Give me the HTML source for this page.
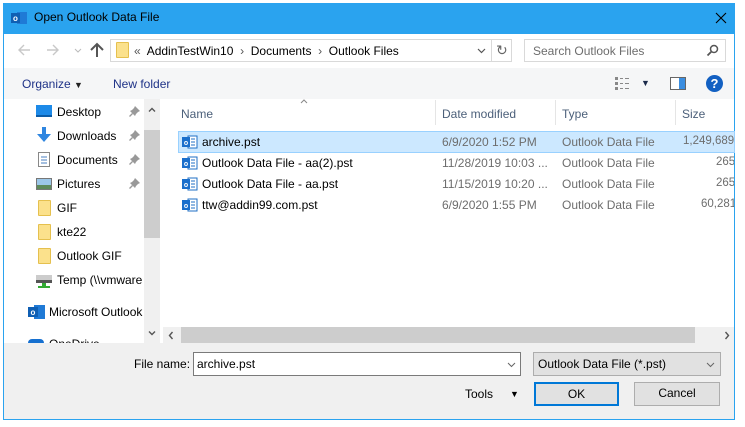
<!DOCTYPE html>
<html><head><meta charset="utf-8"><style>
*{box-sizing:border-box;margin:0;padding:0}
body{width:745px;height:427px;background:#fff;font-family:"Liberation Sans",sans-serif;font-size:12px;color:#000;position:relative;overflow:hidden}
.a{position:absolute}
.win{left:3px;top:3px;width:732px;height:417px;border:1px solid #2aa3ef;background:#fff}
.title{left:3px;top:3px;width:732px;height:31px;background:#2aa3ef}
.t{white-space:nowrap}
.fold{width:13px;height:16px;background:#fbe18c;border:1px solid #e5c04e;border-radius:1px}
.side{font-size:12px}
.hdr{color:#4c607a}
.gray{color:#6d6d6d}
.btn{border:1px solid #adadad;background:#e1e1e1;text-align:center;line-height:21px}
</style></head><body>
<div class="a win"></div>
<div class="a title"></div>
<svg class="a" style="left:11px;top:11px" width="16" height="14" viewBox="0 0 16 14"><rect x="6" y="1" width="10" height="12" fill="#1f7ad6"/><rect x="0" y="2" width="9" height="10" fill="#0f5fb3"/><text x="4.5" y="10" font-size="8" fill="#fff" text-anchor="middle" font-family="Liberation Sans" font-weight="bold">o</text></svg>
<div class="a t" style="left:34px;top:10px;font-size:12px;color:#000">Open Outlook Data File</div>
<svg class="a" style="left:715px;top:12px" width="12" height="12"><path d="M1 1L11 11M11 1L1 11" stroke="#000" stroke-width="1.1"/></svg>

<!-- nav -->
<svg class="a" style="left:17px;top:44px" width="14" height="12"><path d="M13 6H2M7 1L2 6L7 11" stroke="#c8c8c8" stroke-width="1.4" fill="none"/></svg>
<svg class="a" style="left:46px;top:44px" width="14" height="12"><path d="M1 6H12M7 1L12 6L7 11" stroke="#c8c8c8" stroke-width="1.4" fill="none"/></svg>
<svg class="a" style="left:74px;top:48px" width="8" height="5"><path d="M1 1L4 4L7 1" stroke="#bbb" fill="none"/></svg>
<svg class="a" style="left:90px;top:42px" width="14" height="16"><path d="M7 15V2M1 8L7 2L13 8" stroke="#555" stroke-width="2" fill="none"/></svg>
<div class="a" style="left:110px;top:39px;width:402px;height:23px;border:1px solid #d9d9d9"></div>
<div class="a" style="left:491px;top:40px;width:1px;height:21px;background:#d9d9d9"></div>
<div class="a fold" style="left:116px;top:42px"></div>
<div class="a t" style="left:134px;top:44px;font-size:12px;color:#000"><span style="color:#555">«</span>&nbsp; AddinTestWin10 &nbsp;<span style="color:#555">›</span>&nbsp; Documents &nbsp;<span style="color:#555">›</span>&nbsp; Outlook Files</div>
<svg class="a" style="left:477px;top:48px" width="9" height="6"><path d="M1 1L4.5 4.5L8 1" stroke="#555" stroke-width="1.2" fill="none"/></svg>
<div class="a t" style="left:496px;top:42px;font-size:14px;color:#666">↻</div>
<div class="a" style="left:524px;top:39px;width:202px;height:23px;border:1px solid #d9d9d9"></div>
<div class="a t" style="left:533px;top:44px;color:#6d6d6d">Search Outlook Files</div>
<svg class="a" style="left:706px;top:44px" width="14" height="14"><circle cx="8" cy="5" r="3.5" fill="none" stroke="#555" stroke-width="1.5"/><line x1="5.5" y1="7.5" x2="1.5" y2="11.5" stroke="#555" stroke-width="1.8"/></svg>

<!-- toolbar -->
<div class="a" style="left:4px;top:68px;width:730px;height:31px;background:#f5f6f7"></div>
<div class="a t" style="left:22px;top:77px;color:#1e3287">Organize <span style="font-size:9px;color:#222">▼</span></div>
<div class="a t" style="left:113px;top:77px;color:#1e3287">New folder</div>
<svg class="a" style="left:615px;top:77px" width="18" height="14"><g fill="#888"><rect x="0" y="0" width="3" height="3"/><rect x="0" y="5" width="3" height="3"/><rect x="0" y="10" width="3" height="3"/><rect x="5" y="1" width="3" height="1"/><rect x="10" y="1" width="4" height="1"/><rect x="5" y="6" width="3" height="1"/><rect x="10" y="6" width="4" height="1"/><rect x="5" y="11" width="3" height="1"/><rect x="10" y="11" width="4" height="1"/></g></svg>
<div class="a t" style="left:641px;top:78px;font-size:9px;color:#1a2a4a">▼</div>
<svg class="a" style="left:670px;top:77px" width="17" height="14"><rect x="0.5" y="0.5" width="15" height="12" fill="#fff" stroke="#666"/><rect x="9" y="1" width="6" height="11" fill="#3b8ee0"/></svg>
<div class="a" style="left:706px;top:75px;width:17px;height:17px;border-radius:50%;background:#1260c2;color:#fff;font-weight:bold;font-size:13px;text-align:center;line-height:17px">?</div>

<!-- sidebar -->
<div class="a" style="left:144px;top:99px;width:16px;height:244px;background:#f0f0f0"></div>
<div class="a" style="left:144px;top:130px;width:16px;height:108px;background:#cdcdcd"></div>
<svg class="a" style="left:148px;top:107px" width="8" height="5"><path d="M1 4.5L4 1.5L7 4.5" stroke="#555" stroke-width="1.4" fill="none"/></svg>
<svg class="a" style="left:148px;top:331px" width="8" height="5"><path d="M1 0.5L4 3.5L7 0.5" stroke="#555" stroke-width="1.4" fill="none"/></svg>
<div class="a" style="left:160px;top:99px;width:3px;height:244px;background:#fff"></div>

<div class="a" style="left:36px;top:105px;width:16px;height:12px;background:#1d8ae8;border-bottom:2px solid #0b5ca8"></div>
<div class="a t side" style="left:57px;top:105px">Desktop</div>
<svg class="a" style="left:36px;top:127px" width="16" height="16"><rect x="6" y="0" width="4" height="8" fill="#2f86e0"/><polygon points="1,7 15,7 8,15" fill="#2f86e0"/></svg>
<div class="a t side" style="left:57px;top:129px">Downloads</div>
<svg class="a" style="left:38px;top:152px" width="13" height="15"><rect x="0.5" y="0.5" width="11" height="14" fill="#fff" stroke="#888"/><g stroke="#4a7fc0"><line x1="3" y1="5" x2="9" y2="5"/><line x1="3" y1="8" x2="9" y2="8"/><line x1="3" y1="11" x2="9" y2="11"/></g></svg>
<div class="a t side" style="left:57px;top:153px">Documents</div>
<svg class="a" style="left:36px;top:178px" width="16" height="12"><rect x="0.5" y="0.5" width="15" height="11" fill="#9cc7e8" stroke="#777"/><rect x="1" y="7" width="14" height="4" fill="#5e8a5a"/></svg>
<div class="a t side" style="left:57px;top:177px">Pictures</div>
<svg class="a" style="left:129px;top:105px" width="12" height="12"><path d="M6 1L11 6L9 7L7 9L6 11L1 6L3 5L5 3Z" fill="#999"/><path d="M3.5 8.5L0.5 11.5" stroke="#999" stroke-width="1.3"/></svg>
<svg class="a" style="left:129px;top:129px" width="12" height="12"><path d="M6 1L11 6L9 7L7 9L6 11L1 6L3 5L5 3Z" fill="#999"/><path d="M3.5 8.5L0.5 11.5" stroke="#999" stroke-width="1.3"/></svg>
<svg class="a" style="left:129px;top:153px" width="12" height="12"><path d="M6 1L11 6L9 7L7 9L6 11L1 6L3 5L5 3Z" fill="#999"/><path d="M3.5 8.5L0.5 11.5" stroke="#999" stroke-width="1.3"/></svg>
<svg class="a" style="left:129px;top:177px" width="12" height="12"><path d="M6 1L11 6L9 7L7 9L6 11L1 6L3 5L5 3Z" fill="#999"/><path d="M3.5 8.5L0.5 11.5" stroke="#999" stroke-width="1.3"/></svg>
<div class="a fold" style="left:38px;top:200px"></div>
<div class="a t side" style="left:57px;top:201px">GIF</div>
<div class="a fold" style="left:38px;top:224px"></div>
<div class="a t side" style="left:57px;top:225px">kte22</div>
<div class="a fold" style="left:38px;top:248px"></div>
<div class="a t side" style="left:57px;top:249px">Outlook GIF</div>
<svg class="a" style="left:36px;top:274px" width="16" height="14"><rect x="0" y="1" width="16" height="6" fill="#ccc"/><rect x="0" y="6" width="16" height="3" fill="#555"/><rect x="6" y="9" width="4" height="3" fill="#3a3"/><rect x="2" y="12" width="12" height="2" fill="#3a3"/></svg>
<div class="a t side" style="left:57px;top:273px;width:87px;overflow:hidden">Temp (\\vmware</div>
<svg class="a" style="left:28px;top:304px" width="17" height="16"><rect x="6" y="1" width="11" height="14" fill="#1f7ad6"/><rect x="0" y="3" width="10" height="10" fill="#0f5fb3"/><text x="5" y="11" font-size="8" fill="#fff" text-anchor="middle" font-weight="bold" font-family="Liberation Sans">o</text></svg>
<div class="a t side" style="left:49px;top:305px;width:95px;overflow:hidden">Microsoft Outlook</div>
<div class="a" style="left:28px;top:339px;width:16px;height:4px;border-radius:8px 8px 0 0;background:#1670d0"></div>
<div class="a" style="left:49px;top:337px;width:60px;height:6px;overflow:hidden"><div class="t side">OneDrive</div></div>

<!-- headers -->
<svg class="a" style="left:300px;top:99px" width="8" height="5"><path d="M1 4L4 1L7 4" stroke="#888" fill="none"/></svg>
<div class="a t hdr" style="left:181px;top:107px">Name</div>
<div class="a" style="left:435px;top:100px;width:1px;height:25px;background:#e5e5e5"></div>
<div class="a t hdr" style="left:442px;top:107px">Date modified</div>
<div class="a" style="left:555px;top:100px;width:1px;height:25px;background:#e5e5e5"></div>
<div class="a t hdr" style="left:562px;top:107px">Type</div>
<div class="a" style="left:675px;top:100px;width:1px;height:25px;background:#e5e5e5"></div>
<div class="a t hdr" style="left:682px;top:107px">Size</div>

<div class="a" style="left:178px;top:131px;width:557px;height:22px;background:#cce8ff;border:1px solid #99d1ff"></div>
<div class="a" style="left:163px;top:130px;width:571px;height:100px;overflow:hidden">
<div style="position:relative;width:571px;height:100px">
<svg class="a" style="left:19px;top:5px" width="16" height="14"><rect x="6" y="1" width="9" height="12" fill="#fff" stroke="#1f6fc4"/><g stroke="#1f6fc4"><line x1="9" y1="4" x2="13" y2="4"/><line x1="9" y1="7" x2="13" y2="7"/><line x1="9" y1="10" x2="13" y2="10"/></g><rect x="0" y="2" width="8" height="10" fill="#1a6fcc"/><text x="4" y="10" font-size="7" fill="#fff" text-anchor="middle" font-weight="bold" font-family="Liberation Sans">o</text></svg>
<svg class="a" style="left:19px;top:26px" width="16" height="14"><rect x="6" y="1" width="9" height="12" fill="#fff" stroke="#1f6fc4"/><g stroke="#1f6fc4"><line x1="9" y1="4" x2="13" y2="4"/><line x1="9" y1="7" x2="13" y2="7"/><line x1="9" y1="10" x2="13" y2="10"/></g><rect x="0" y="2" width="8" height="10" fill="#1a6fcc"/><text x="4" y="10" font-size="7" fill="#fff" text-anchor="middle" font-weight="bold" font-family="Liberation Sans">o</text></svg>
<svg class="a" style="left:19px;top:47px" width="16" height="14"><rect x="6" y="1" width="9" height="12" fill="#fff" stroke="#1f6fc4"/><g stroke="#1f6fc4"><line x1="9" y1="4" x2="13" y2="4"/><line x1="9" y1="7" x2="13" y2="7"/><line x1="9" y1="10" x2="13" y2="10"/></g><rect x="0" y="2" width="8" height="10" fill="#1a6fcc"/><text x="4" y="10" font-size="7" fill="#fff" text-anchor="middle" font-weight="bold" font-family="Liberation Sans">o</text></svg>
<svg class="a" style="left:19px;top:68px" width="16" height="14"><rect x="6" y="1" width="9" height="12" fill="#fff" stroke="#1f6fc4"/><g stroke="#1f6fc4"><line x1="9" y1="4" x2="13" y2="4"/><line x1="9" y1="7" x2="13" y2="7"/><line x1="9" y1="10" x2="13" y2="10"/></g><rect x="0" y="2" width="8" height="10" fill="#1a6fcc"/><text x="4" y="10" font-size="7" fill="#fff" text-anchor="middle" font-weight="bold" font-family="Liberation Sans">o</text></svg>
<div class="a t" style="left:39px;top:5px">archive.pst</div>
<div class="a t" style="left:39px;top:26px">Outlook Data File - aa(2).pst</div>
<div class="a t" style="left:39px;top:47px">Outlook Data File - aa.pst</div>
<div class="a t" style="left:39px;top:68px">ttw@addin99.com.pst</div>
<div class="a t gray" style="left:279px;top:5px">6/9/2020 1:52 PM</div>
<div class="a t gray" style="left:279px;top:26px">11/28/2019 10:03 ...</div>
<div class="a t gray" style="left:279px;top:47px">11/15/2019 10:20 ...</div>
<div class="a t gray" style="left:279px;top:68px">6/9/2020 1:55 PM</div>
<div class="a t gray" style="left:399px;top:5px">Outlook Data File</div>
<div class="a t gray" style="left:399px;top:26px">Outlook Data File</div>
<div class="a t gray" style="left:399px;top:47px">Outlook Data File</div>
<div class="a t gray" style="left:399px;top:68px">Outlook Data File</div>
<div class="a t gray" style="left:520px;top:5px;font-size:11.5px">1,249,689 KB</div>
<div class="a t gray" style="left:553px;top:26px;font-size:11.5px">265 KB</div>
<div class="a t gray" style="left:553px;top:47px;font-size:11.5px">265 KB</div>
<div class="a t gray" style="left:538px;top:68px;font-size:11.5px">60,281 KB</div>
</div></div>

<!-- h scrollbar -->
<div class="a" style="left:163px;top:327px;width:571px;height:16px;background:#f0f0f0"></div>
<div class="a" style="left:181px;top:327px;width:514px;height:16px;background:#cdcdcd"></div>
<svg class="a" style="left:168px;top:331px" width="6" height="9"><path d="M4.5 1L1.5 4.5L4.5 8" stroke="#555" stroke-width="1.4" fill="none"/></svg>
<svg class="a" style="left:724px;top:331px" width="6" height="9"><path d="M1.5 1L4.5 4.5L1.5 8" stroke="#555" stroke-width="1.4" fill="none"/></svg>

<!-- bottom -->
<div class="a" style="left:4px;top:343px;width:730px;height:76px;background:#f0f0f0"></div>
<div class="a t" style="left:134px;top:357px">File name:</div>
<div class="a" style="left:193px;top:352px;width:328px;height:24px;background:#fff;border:1px solid #7a7a7a"></div>
<div class="a t" style="left:197px;top:357px">archive.pst</div>
<svg class="a" style="left:507px;top:362px" width="9" height="6"><path d="M1 1L4.5 4.5L8 1" stroke="#666" fill="none"/></svg>
<div class="a" style="left:533px;top:352px;width:188px;height:24px;background:#e1e1e1;border:1px solid #adadad"></div>
<div class="a t" style="left:538px;top:357px">Outlook Data File (*.pst)</div>
<svg class="a" style="left:706px;top:362px" width="9" height="6"><path d="M1 1L4.5 4.5L8 1" stroke="#666" fill="none"/></svg>
<div class="a t" style="left:465px;top:387px">Tools</div>
<div class="a t" style="left:510px;top:389px;font-size:9px">▼</div>
<div class="a btn" style="left:534px;top:382px;width:85px;height:24px;border:2px solid #0078d7;line-height:20px">OK</div>
<div class="a btn" style="left:634px;top:382px;width:86px;height:24px">Cancel</div>
</body></html>
